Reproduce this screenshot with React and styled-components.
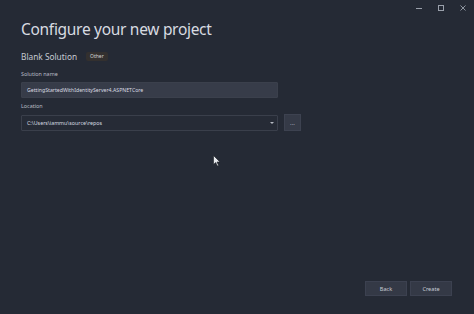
import React from "react";
import styled, { createGlobalStyle } from "styled-components";

const Global = createGlobalStyle`
  html, body { margin: 0; padding: 0; background: #252a35; }
  body { font-family: "Noto Sans", "Open Sans", sans-serif; }
  * { box-sizing: border-box; }
`;

const Window = styled.div`
  position: relative;
  width: 474px;
  height: 314px;
  background: #252a35;
  display: flex;
  flex-direction: column;
  color: #d6d9df;
  overflow: hidden;
`;

const TitleBar = styled.div`
  display: flex;
  justify-content: flex-end;
  height: 15px;
`;

const CaptionButton = styled.div`
  width: 22px;
  height: 15px;
  display: flex;
  align-items: center;
  justify-content: center;
  color: #9aa0ab;
`;

const Content = styled.div`
  flex: 1;
  display: flex;
  flex-direction: column;
  padding: 4px 0 0 21px;
`;

const Title = styled.h1`
  margin: 0;
  font-weight: 400;
  font-size: 15.5px;
  line-height: 20px;
  color: #d8dbe1;
  letter-spacing: -0.3px;
`;

const SubRow = styled.div`
  display: flex;
  align-items: center;
  gap: 9px;
  margin-top: 10px;
  height: 14px;
`;

const Subtitle = styled.span`
  font-size: 8.3px;
  color: #c6cad2;
`;

const Tag = styled.span`
  font-size: 5px;
  color: #d2d4d8;
  background: #33302f;
  padding: 2px 4px;
  border-radius: 2px;
  line-height: 5px;
`;

const Label = styled.div`
  font-size: 5.4px;
  color: #b9bdc6;
  margin-top: ${(p) => p.$mt}px;
  height: 8px;
  line-height: 8px;
`;

const FieldRow = styled.div`
  display: flex;
  align-items: center;
  gap: 6px;
  margin-top: 4px;
`;

const TextInput = styled.div`
  width: 257px;
  height: 16px;
  background: #373c49;
  border: 1px solid #3b404c;
  border-radius: 1px;
  font-size: 5.2px;
  color: #d8dbe1;
  display: flex;
  align-items: center;
  padding-left: 5px;
`;

const Combo = styled(TextInput)`
  background: #262b36;
  border: 1px solid #3a3f4b;
  justify-content: space-between;
  padding-right: 3px;
  font-size: 5.3px;
`;

const Arrow = styled.span`
  width: 0;
  height: 0;
  border-left: 2px solid transparent;
  border-right: 2px solid transparent;
  border-top: 2px solid #b5b9c2;
`;

const BrowseButton = styled.div`
  width: 17px;
  height: 17px;
  background: #353a47;
  border: 1px solid #3d4250;
  display: flex;
  align-items: center;
  justify-content: center;
  color: #b8bcc5;
  font-size: 6px;
`;

const Footer = styled.div`
  margin-top: auto;
  display: flex;
  justify-content: flex-end;
  gap: 3px;
  padding: 0 22px 18px 0;
`;

const Button = styled.div`
  width: 42px;
  height: 15px;
  background: #343946;
  border: 1px solid #3c4150;
  font-size: 5.6px;
  color: #c8ccd4;
  display: flex;
  align-items: center;
  justify-content: center;
`;

const Cursor = styled.svg`
  position: absolute;
  left: 213px;
  top: 155px;
`;

export default function App() {
  return (
    <>
      <Global />
      <Window>
        <TitleBar>
          <CaptionButton>
            <svg width="8" height="8" viewBox="0 0 8 8">
              <path d="M1 4.5h6" stroke="currentColor" strokeWidth="1" />
            </svg>
          </CaptionButton>
          <CaptionButton>
            <svg width="8" height="8" viewBox="0 0 8 8">
              <rect x="1.5" y="1.5" width="5" height="5" fill="none" stroke="currentColor" strokeWidth="1" />
            </svg>
          </CaptionButton>
          <CaptionButton>
            <svg width="8" height="8" viewBox="0 0 8 8">
              <path d="M1.5 1.5l5 5M6.5 1.5l-5 5" stroke="currentColor" strokeWidth="0.9" />
            </svg>
          </CaptionButton>
        </TitleBar>
        <Content>
          <Title>Configure your new project</Title>
          <SubRow>
            <Subtitle>Blank Solution</Subtitle>
            <Tag>Other</Tag>
          </SubRow>
          <Label $mt={7}>Solution name</Label>
          <FieldRow>
            <TextInput>GettingStartedWithIdentityServer4.ASPNETCore</TextInput>
          </FieldRow>
          <Label $mt={4}>Location</Label>
          <FieldRow>
            <Combo>
              <span>C:\Users\iammu\source\repos</span>
              <Arrow />
            </Combo>
            <BrowseButton>...</BrowseButton>
          </FieldRow>
        </Content>
        <Footer>
          <Button>Back</Button>
          <Button>Create</Button>
        </Footer>
        <Cursor width="8" height="12" viewBox="0 0 8 12">
          <path d="M0.5 0.5v9l2.2-2 1.6 3.5 1.3-.6-1.6-3.4h3z" fill="#e8eaee" stroke="#1a1d24" strokeWidth="0.6" />
        </Cursor>
      </Window>
    </>
  );
}
